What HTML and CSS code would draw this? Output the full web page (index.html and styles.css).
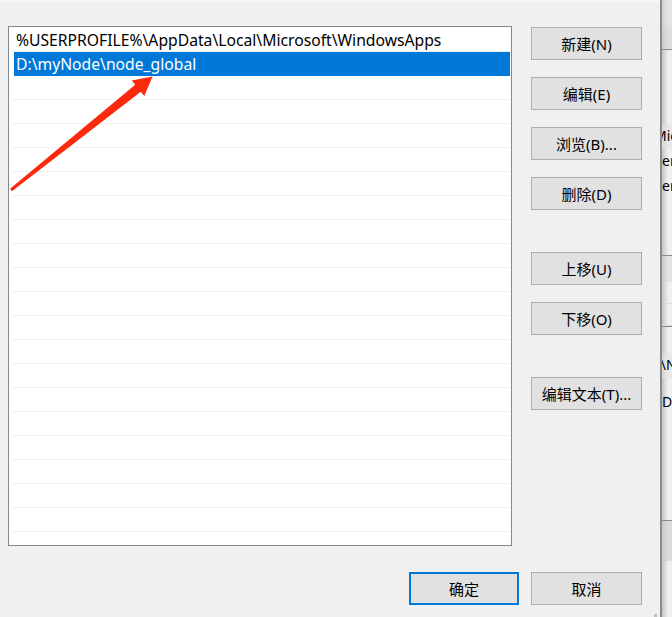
FILE: index.html
```html
<!DOCTYPE html>
<html lang="zh-CN">

<head>
    <meta charset="UTF-8">
    <meta name="viewport" content="width=device-width, initial-scale=1.0">
    <title>编辑环境变量</title>
    <link rel="stylesheet" href="styles.css">
</head>

<body>
    <div class="screen">
        <div class="dialog">
            <div class="main">
                <div class="list">
                    <div class="row">%USERPROFILE%\AppData\Local\Microsoft\WindowsApps</div>
                    <div class="row selected">D:\myNode\node_global</div>
                    <div class="row"></div>
                    <div class="row"></div>
                    <div class="row"></div>
                    <div class="row"></div>
                    <div class="row"></div>
                    <div class="row"></div>
                    <div class="row"></div>
                    <div class="row"></div>
                    <div class="row"></div>
                    <div class="row"></div>
                    <div class="row"></div>
                    <div class="row"></div>
                    <div class="row"></div>
                    <div class="row"></div>
                    <div class="row"></div>
                    <div class="row"></div>
                    <div class="row"></div>
                    <div class="row"></div>
                    <div class="row"></div>
                    <div class="row last"></div>
                </div>
                <div class="side">
                    <button class="btn">新建(N)</button>
                    <button class="btn">编辑(E)</button>
                    <button class="btn">浏览(B)...</button>
                    <button class="btn">删除(D)</button>
                    <button class="btn group">上移(U)</button>
                    <button class="btn">下移(O)</button>
                    <button class="btn group">编辑文本(T)...</button>
                </div>
            </div>
            <div class="footer">
                <button class="btn primary">确定</button>
                <button class="btn">取消</button>
            </div>
            <div class="grip"></div>

            <!-- red annotation arrow -->
            <svg class="arrow" width="170" height="200" viewBox="0 0 170 200">
                <polygon fill="#fb2a0c" points="10.1,188.8 135.2,84.8 131.8,80.5 152.5,76.5 144.3,96.1 140.8,91.8 11.9,191.2" />
            </svg>
        </div>

        <div class="behind">
            <div class="b-top"></div>
            <div class="b-bar"></div>
            <div class="b-gap1"></div>
            <div class="b-text hl cut">Mic</div>
            <div class="b-text">er</div>
            <div class="b-text">er</div>
            <div class="b-gap2"></div>
            <div class="b-head"></div>
            <div class="b-cell"></div>
            <div class="b-cell"></div>
            <div class="b-gap3"></div>
            <div class="b-text hl cut">s\N</div>
            <div class="b-gap4"></div>
            <div class="b-text">D:</div>
            <div class="b-gap5"></div>
            <div class="b-foot"></div>
        </div>
    </div>
</body>

</html>
```

FILE: styles.css
```css
* {
    margin: 0;
    box-sizing: border-box;
}

body {
    background-color: #f0f0f0;
    font-family: "Noto Sans", "Noto Sans CJK SC", sans-serif;
    font-size: 15px;
    color: #000;
    overflow: hidden;
}

.screen {
    display: flex;
    height: 617px;
}

.dialog {
    position: relative;
    width: 660px;
    height: 617px;
    padding: 24px 0 0 8px;
    background-color: #f0f0f0;
    border-top: 2px solid #f7f7f7;
}

.main {
    display: flex;
}

.list {
    width: 504px;
    height: 520px;
    border: 1px solid #828790;
    background-color: #fff;
    padding: 1px 1px 0 1px;
    overflow: hidden;
}

.row {
    height: 24px;
    line-height: 24px;
    margin-left: 1px;
    padding-left: 5px;
    border-bottom: 1px solid #f0f0f0;
    font-size: 15.7px;
    white-space: nowrap;
}

.row.selected {
    margin-left: 4px;
    padding-left: 2px;
    background-color: #0078d7;
    border-bottom-color: #0078d7;
    color: #fff;
}

.side {
    display: flex;
    flex-direction: column;
    gap: 17px;
    margin-left: 19px;
    padding-top: 1px;
}

.btn {
    width: 111px;
    height: 33px;
    border: 1px solid #adadad;
    background-color: #e1e1e1;
    font-family: "Noto Sans", "Noto Sans CJK SC", sans-serif;
    font-size: 15px;
    color: #000;
    padding: 0;
}

.btn.group {
    margin-top: 25px;
}

.footer {
    display: flex;
    justify-content: flex-end;
    gap: 12px;
    margin-top: 26px;
    padding-right: 18px;
}

.btn.primary {
    width: 110px;
    border: 2px solid #0078d7;
}

.grip {
    position: absolute;
    right: 3px;
    bottom: 0;
    width: 3px;
    height: 3px;
    background-color: #c0c0c0;
}

.arrow {
    position: absolute;
    left: 0;
    top: -2px;
}

/* window behind the dialog */
.behind {
    width: 12px;
    height: 617px;
    overflow: hidden;
    border-left: 2px solid #8c8c8c;
    background: linear-gradient(to right, #c4c4c4, #f0f0f0 6px);
    font-size: 14px;
    line-height: 20px;
}

.b-top {
    height: 27px;
    background: linear-gradient(to right, #d0d0d0, #e4e4e4 6px);
}

.b-bar {
    height: 23px;
    background: linear-gradient(to right, #cccccc, #dedede 6px);
    border-bottom: 1px solid #8a8a8a;
}

.b-gap1 {
    height: 74px;
}

.b-text {
    height: 25px;
    padding-top: 2px;
    white-space: nowrap;
}

.b-text.hl {
    background: linear-gradient(to right, #d8d8d8, #e8e8e8 6px);
}

.b-text.cut {
    text-indent: -8px;
}

.b-gap2 {
    height: 57px;
    border-bottom: 1px solid #8a8a8a;
}

.b-head {
    height: 26px;
    background: linear-gradient(to right, #c8c8c8, #e2e2e2 6px);
}

.b-cell {
    height: 22px;
    border-bottom: 1px solid #dadada;
}

.b-gap3 {
    height: 27px;
    border-top: 1px solid #8a8a8a;
}

.b-gap4 {
    height: 12px;
}

.b-gap5 {
    height: 106px;
    border-bottom: 1px solid #8a8a8a;
}

.b-foot {
    height: 40px;
    background: linear-gradient(to right, #c8c8c8, #dcdcdc 6px);
}
```
